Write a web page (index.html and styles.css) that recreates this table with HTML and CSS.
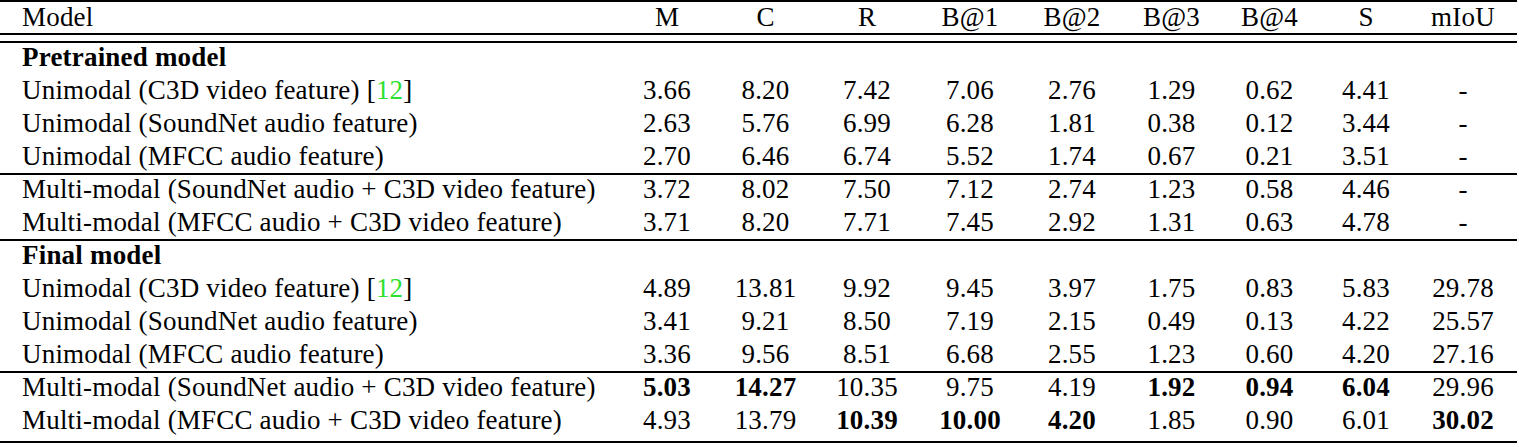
FILE: index.html
```html
<!DOCTYPE html>
<html lang="en">
<head>
	<meta charset="UTF-8">
	<meta name="viewport" content="width=device-width, initial-scale=1.0">
	<title>Results</title>
	<link rel="stylesheet" href="styles.css">
</head>
<body>
	<div class="table">
		<div class="row head">
			<div class="name">Model</div>
			<div>M</div><div>C</div><div>R</div><div>B@1</div><div>B@2</div><div>B@3</div><div>B@4</div><div>S</div><div>mIoU</div>
		</div>

		<!-- pretrained -->
		<div class="group">
			<div class="row"><div class="name"><b>Pretrained model</b></div></div>
			<div class="row">
				<div class="name">Unimodal (C3D video feature) [<span class="cite">12</span>]</div>
				<div>3.66</div><div>8.20</div><div>7.42</div><div>7.06</div><div>2.76</div><div>1.29</div><div>0.62</div><div>4.41</div><div>-</div>
			</div>
			<div class="row">
				<div class="name">Unimodal (SoundNet audio feature)</div>
				<div>2.63</div><div>5.76</div><div>6.99</div><div>6.28</div><div>1.81</div><div>0.38</div><div>0.12</div><div>3.44</div><div>-</div>
			</div>
			<div class="row">
				<div class="name">Unimodal (MFCC audio feature)</div>
				<div>2.70</div><div>6.46</div><div>6.74</div><div>5.52</div><div>1.74</div><div>0.67</div><div>0.21</div><div>3.51</div><div>-</div>
			</div>
		</div>
		<div class="group">
			<div class="row">
				<div class="name">Multi-modal (SoundNet audio + C3D video feature)</div>
				<div>3.72</div><div>8.02</div><div>7.50</div><div>7.12</div><div>2.74</div><div>1.23</div><div>0.58</div><div>4.46</div><div>-</div>
			</div>
			<div class="row">
				<div class="name">Multi-modal (MFCC audio + C3D video feature)</div>
				<div>3.71</div><div>8.20</div><div>7.71</div><div>7.45</div><div>2.92</div><div>1.31</div><div>0.63</div><div>4.78</div><div>-</div>
			</div>
		</div>

		<!-- final -->
		<div class="group">
			<div class="row"><div class="name"><b>Final model</b></div></div>
			<div class="row">
				<div class="name">Unimodal (C3D video feature) [<span class="cite">12</span>]</div>
				<div>4.89</div><div>13.81</div><div>9.92</div><div>9.45</div><div>3.97</div><div>1.75</div><div>0.83</div><div>5.83</div><div>29.78</div>
			</div>
			<div class="row">
				<div class="name">Unimodal (SoundNet audio feature)</div>
				<div>3.41</div><div>9.21</div><div>8.50</div><div>7.19</div><div>2.15</div><div>0.49</div><div>0.13</div><div>4.22</div><div>25.57</div>
			</div>
			<div class="row">
				<div class="name">Unimodal (MFCC audio feature)</div>
				<div>3.36</div><div>9.56</div><div>8.51</div><div>6.68</div><div>2.55</div><div>1.23</div><div>0.60</div><div>4.20</div><div>27.16</div>
			</div>
		</div>
		<div class="group">
			<div class="row">
				<div class="name">Multi-modal (SoundNet audio + C3D video feature)</div>
				<div><b>5.03</b></div><div><b>14.27</b></div><div>10.35</div><div>9.75</div><div>4.19</div><div><b>1.92</b></div><div><b>0.94</b></div><div><b>6.04</b></div><div>29.96</div>
			</div>
			<div class="row">
				<div class="name">Multi-modal (MFCC audio + C3D video feature)</div>
				<div>4.93</div><div>13.79</div><div><b>10.39</b></div><div><b>10.00</b></div><div><b>4.20</b></div><div>1.85</div><div>0.90</div><div>6.01</div><div><b>30.02</b></div>
			</div>
		</div>
	</div>
</body>
</html>
```

FILE: styles.css
```css
body {
	margin: 0;
	background: #fff;
	color: #000;
	font-family: "Liberation Serif", "Times New Roman", serif;
	font-size: 27px;
	letter-spacing: 0.2px;
}

.table {
	width: 1517px;
	border-top: 2px solid #000;
	border-bottom: 2px solid #000;
	padding-bottom: 4px;
}

.row {
	display: grid;
	grid-template-columns: 619px 96px 101px 102px 104px 100px 99px 97px 96px 98px;
	height: 33px;
	line-height: 33px;
	text-align: center;
}
.row .name {
	text-align: left;
	padding-left: 22px;
	white-space: nowrap;
}

.head {
	height: 31px;
	line-height: 31px;
	border-bottom: 2px solid #000;
	margin-bottom: 6px;
}

.group {
	box-shadow: inset 0 2px 0 #000;
}

.cite { color: #2ee02e; }
b { font-weight: bold; }
```
